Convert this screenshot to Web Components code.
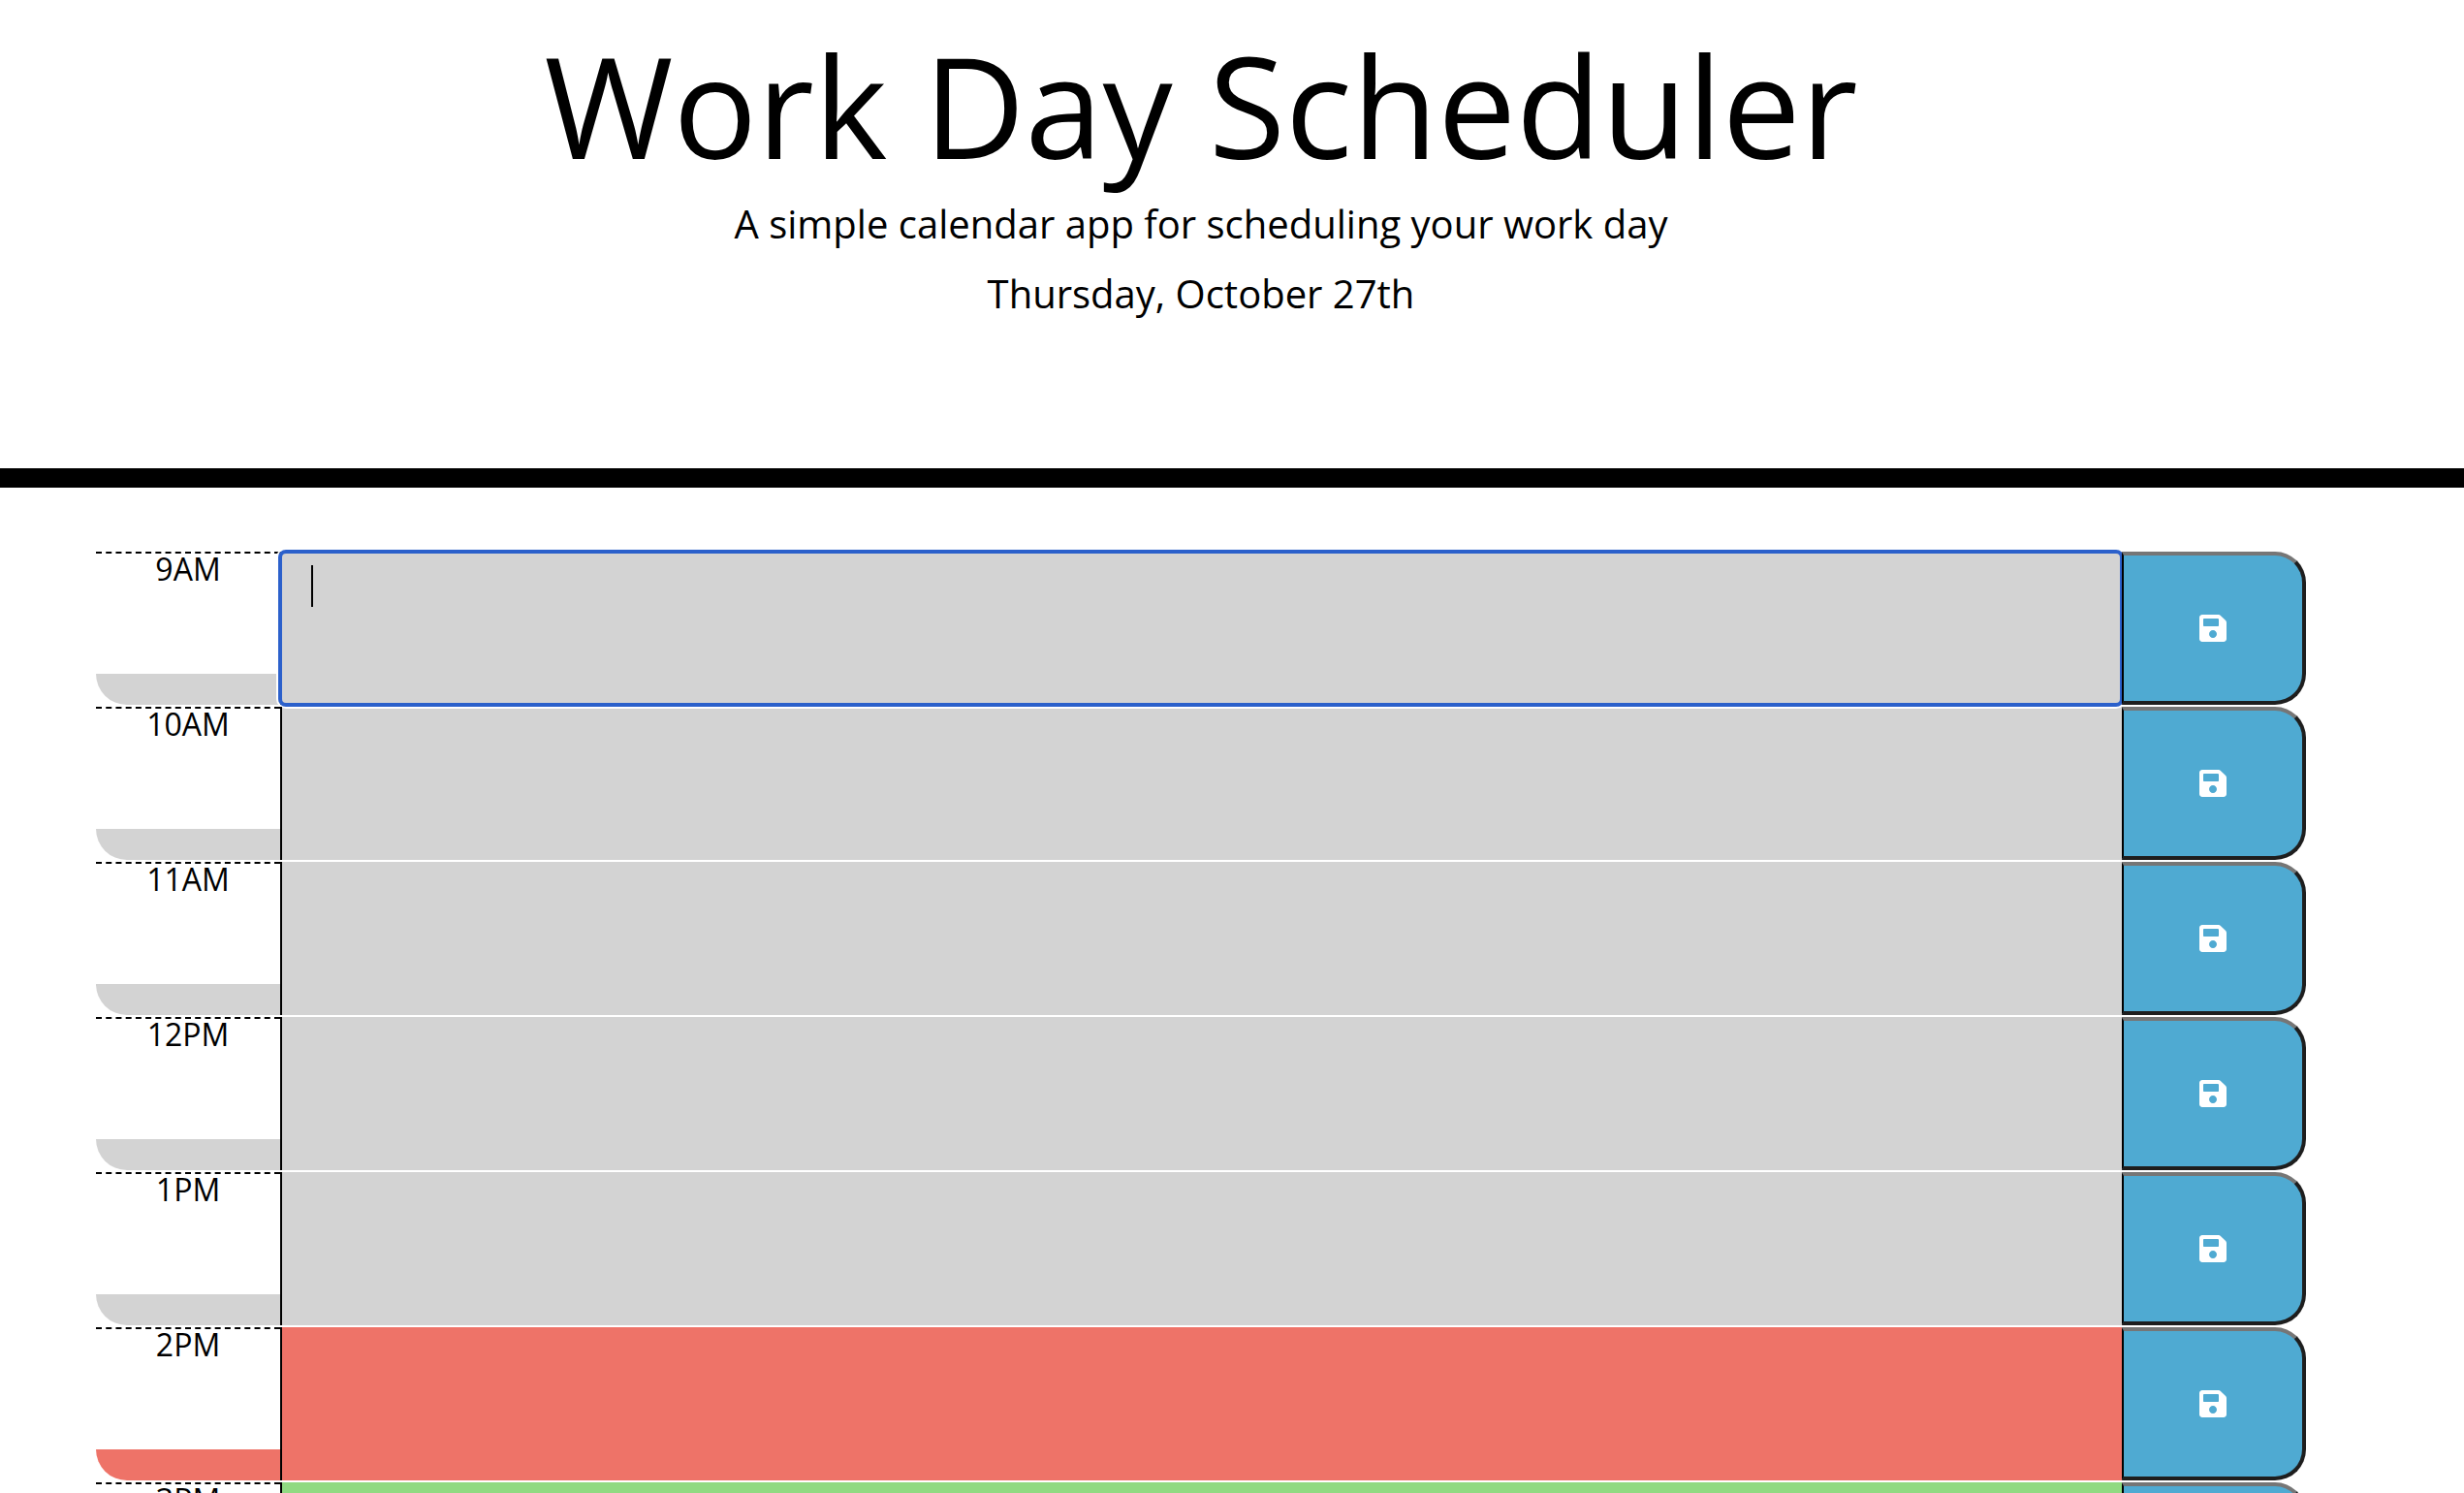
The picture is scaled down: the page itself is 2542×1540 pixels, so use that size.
<!DOCTYPE html>
<html lang="en">
<head>
<meta charset="utf-8">
<title>Work Day Scheduler</title>
<style>
  html { overflow: hidden; }
  body { margin: 0; background: #fff; color: #000; font-family: "Open Sans", "Liberation Sans", sans-serif; }
</style>
</head>
<body>
<scheduler-header>
  <span slot="title">Work Day Scheduler</span>
  <span slot="lead">A simple calendar app for scheduling your work day</span>
  <span slot="date">Thursday, October 27th</span>
</scheduler-header>

<schedule-list>
  <time-block tense="past" focused>9AM</time-block>
  <time-block tense="past">10AM</time-block>
  <time-block tense="past">11AM</time-block>
  <time-block tense="past">12PM</time-block>
  <time-block tense="past">1PM</time-block>
  <time-block tense="present">2PM</time-block>
  <time-block tense="future">3PM</time-block>
  <time-block tense="future">4PM</time-block>
  <time-block tense="future">5PM</time-block>
</schedule-list>

<script>
class SchedulerHeader extends HTMLElement {
  constructor () {
    super()
    this.attachShadow({ mode: 'open' })
  }

  static get styles () {
    return `
      :host {
        display: block;
        box-sizing: border-box;
        height: 503px;
        padding: 16px 64px 0 0;
        border-bottom: 20px solid #000;
        text-align: center;
      }

      h1 {
        margin: 0;
        font-size: 144px;
        font-weight: 400;
        line-height: 185px;
      }

      p {
        margin: 0 0 12px;
        font-size: 40px;
        font-weight: 400;
        line-height: 60px;
      }
    `
  }

  connectedCallback () {
    this.shadowRoot.innerHTML = `
      <style>${SchedulerHeader.styles}</style>
      <h1><slot name="title"></slot></h1>
      <p class="lead"><slot name="lead"></slot></p>
      <p class="date"><slot name="date"></slot></p>
    `
  }
}

class ScheduleList extends HTMLElement {
  constructor () {
    super()
    this.attachShadow({ mode: 'open' })
  }

  connectedCallback () {
    this.shadowRoot.innerHTML = `
      <style>
        :host {
          display: grid;
          row-gap: 2px;
          width: 2280px;
          margin: 66px 0 0 99px;
        }
      </style>
      <slot></slot>
    `
  }
}

class SaveButton extends HTMLElement {
  constructor () {
    super()
    this.attachShadow({ mode: 'open' })
  }

  connectedCallback () {
    this.shadowRoot.innerHTML = `
      <style>
        :host { display: block; position: relative; z-index: 3; }

        button {
          display: flex;
          align-items: center;
          justify-content: center;
          box-sizing: border-box;
          width: 100%;
          height: 100%;
          padding: 0;
          background-color: #4faad2;
          border-style: solid;
          border-width: 4px 4px 4px 2px;
          border-color: #767676 #1e1e1e #1e1e1e #000;
          border-radius: 0 32px 32px 0;
        }

        svg { display: block; width: 28px; height: 32px; fill: #fff; }
      </style>
      <button type="button" aria-label="Save">
        <svg viewBox="0 0 448 512"><path d="M433.941 129.941l-83.882-83.882A48 48 0 0 0 316.118 32H48C21.49 32 0 53.49 0 80v352c0 26.51 21.49 48 48 48h352c26.51 0 48-21.49 48-48V163.882a48 48 0 0 0-14.059-33.941zM224 416c-35.346 0-64-28.654-64-64 0-35.346 28.654-64 64-64s64 28.654 64 64c0 35.346-28.654 64-64 64zm96-304.52V212c0 6.627-5.373 12-12 12H76c-6.627 0-12-5.373-12-12V108c0-6.627 5.373-12 12-12h228.52c3.183 0 6.235 1.264 8.485 3.515l3.48 3.48A11.996 11.996 0 0 1 320 111.48z"/></svg>
      </button>
    `
  }
}

class TimeBlock extends HTMLElement {
  constructor () {
    super()
    this.attachShadow({ mode: 'open' })
  }

  static get styles () {
    return `
      :host {
        display: grid;
        grid-template-columns: 190px 1900px 190px;
        height: 158px;
        position: relative;
        --tense: #d3d3d3;
      }

      :host([tense="present"]) { --tense: #ee7368; }
      :host([tense="future"]) { --tense: #90da82; }
      :host([focused]) { z-index: 1; }

      .hour {
        display: flex;
        flex-direction: column;
        justify-content: space-between;
        border-top: 2px dashed #000;
        font-size: 32px;
        line-height: 32px;
        text-align: center;
      }

      .hour span { display: block; }

      .band {
        height: 32px;
        background-color: var(--tense);
        border-bottom-left-radius: 32px;
      }

      .entry { position: relative; }

      textarea {
        display: block;
        box-sizing: border-box;
        width: 100%;
        height: 100%;
        margin: 0;
        padding: 0;
        resize: none;
        background-color: var(--tense);
        border: 0;
        border-left: 2px solid #000;
        border-radius: 0;
        outline: none;
      }

      /* halo must not cover the next row's dashed line and left rule */
      .ring {
        position: absolute;
        inset: -2px;
        border: 4px solid #2b60cb;
        border-radius: 8px;
        box-shadow: 0 0 0 2px #fff;
        clip-path: polygon(-2px -2px, calc(100% + 2px) -2px, calc(100% + 2px) calc(100% + 2px), 4px calc(100% + 2px), 4px 100%, -2px 100%);
        pointer-events: none;
      }

      .caret {
        position: absolute;
        left: 32px;
        top: 14px;
        width: 2px;
        height: 43px;
        background: #000;
      }
    `
  }

  connectedCallback () {
    const focused = this.hasAttribute('focused')
    this.shadowRoot.innerHTML = `
      <style>${TimeBlock.styles}</style>
      <div class="hour"><span><slot></slot></span><div class="band"></div></div>
      <div class="entry">
        <textarea aria-label="Notes"></textarea>
        ${focused ? '<div class="ring"></div><div class="caret"></div>' : ''}
      </div>
      <save-button></save-button>
    `
  }
}

customElements.define('scheduler-header', SchedulerHeader)
customElements.define('schedule-list', ScheduleList)
customElements.define('save-button', SaveButton)
customElements.define('time-block', TimeBlock)
</script>
</body>
</html>
